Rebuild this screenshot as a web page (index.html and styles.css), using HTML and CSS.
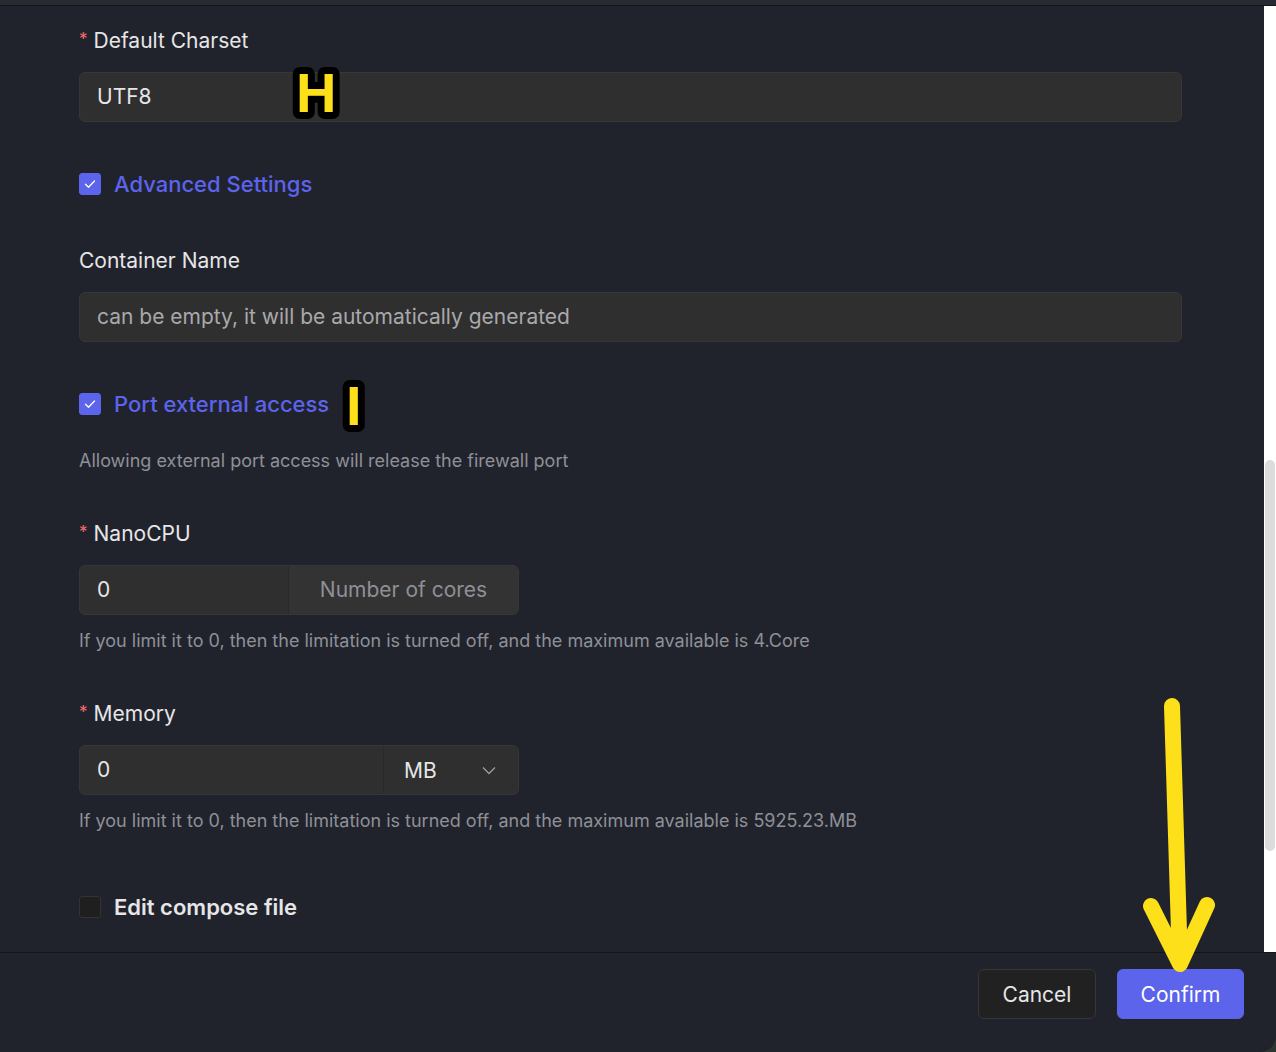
FILE: index.html
```html
<!DOCTYPE html>
<html lang="en">

<head>
  <meta charset="UTF-8">
  <meta name="viewport" content="width=device-width, initial-scale=1.0">
  <title>Create container</title>
  <link rel="stylesheet" href="styles.css">
</head>

<body>
  <div class="drawer">
    <div class="drawer-top"></div>

    <div class="drawer-main">
      <div class="drawer-body">

        <div class="form-item">
          <label class="form-label"><span class="required">*</span>Default Charset</label>
          <div class="input">UTF8</div>
        </div>

        <div class="form-item">
          <div class="check-row checked">
            <span class="checkbox"><svg viewBox="0 0 22 22" width="22" height="22"><path d="M6.5 11.2l3 3 6-6.2" fill="none" stroke="#fff" stroke-width="1.3" stroke-linecap="round" stroke-linejoin="round"/></svg></span>
            <span class="check-text">Advanced Settings</span>
          </div>
        </div>

        <div class="form-item">
          <label class="form-label">Container Name</label>
          <div class="input placeholder">can be empty, it will be automatically generated</div>
        </div>

        <div class="form-item">
          <div class="check-row checked">
            <span class="checkbox"><svg viewBox="0 0 22 22" width="22" height="22"><path d="M6.5 11.2l3 3 6-6.2" fill="none" stroke="#fff" stroke-width="1.3" stroke-linecap="round" stroke-linejoin="round"/></svg></span>
            <span class="check-text">Port external access</span>
          </div>
          <p class="form-help help-loose">Allowing external port access will release the firewall port</p>
        </div>

        <div class="form-item">
          <label class="form-label"><span class="required">*</span>NanoCPU</label>
          <div class="input-group">
            <div class="group-input cpu">0</div>
            <div class="group-append">Number of cores</div>
          </div>
          <p class="form-help">If you limit it to 0, then the limitation is turned off, and the maximum available is 4.Core</p>
        </div>

        <div class="form-item">
          <label class="form-label"><span class="required">*</span>Memory</label>
          <div class="input-group">
            <div class="group-input mem">0</div>
            <div class="group-select">
              <span>MB</span>
              <svg viewBox="0 0 16 16" width="16" height="16"><path d="M2 5.5l6 6 6-6" fill="none" stroke="#9a9ca3" stroke-width="1.3"/></svg>
            </div>
          </div>
          <p class="form-help">If you limit it to 0, then the limitation is turned off, and the maximum available is 5925.23.MB</p>
        </div>

        <div class="form-item last">
          <div class="check-row">
            <span class="checkbox"></span>
            <span class="check-text plain">Edit compose file</span>
          </div>
        </div>

      </div>

      <div class="scrollbar">
        <div class="scroll-thumb"></div>
      </div>
    </div>

    <div class="drawer-footer">
      <button class="btn btn-cancel">Cancel</button>
      <button class="btn btn-primary">Confirm</button>
    </div>
  </div>

  <!-- annotation marks drawn over the screenshot -->
  <svg class="marks" width="1276" height="1052" viewBox="0 0 1276 1052">
    <text class="mark-letter" x="296" y="112">H</text>
    <text class="mark-letter" x="346" y="425">I</text>
    <path d="M1172 706 L1180 964 M1151 906 L1180 964 L1207 905" fill="none" stroke="#fde01a" stroke-width="16" stroke-linecap="round" stroke-linejoin="round"/>
  </svg>
</body>

</html>
```

FILE: styles.css
```css
* {
  box-sizing: border-box;
  margin: 0;
  padding: 0;
}

body {
  width: 100vw;
  height: 100vh;
  overflow: hidden;
  background: #2c352f;
  font-family: Inter, 'Liberation Sans', sans-serif;
  color: #e5e5e7;
}

.drawer {
  display: flex;
  flex-direction: column;
  height: 100%;
}

.drawer-top {
  height: 6px;
  flex: 0 0 6px;
  background: #292b33;
  border-bottom: 1px solid #141519;
}

.drawer-main {
  flex: 1;
  display: flex;
  min-height: 0;
}

.drawer-body {
  flex: 1;
  background: #21232c;
  padding: 20px 82px 0 79px;
  overflow: hidden;
}

.scrollbar {
  flex: 0 0 12px;
  background: #fff;
  padding: 454px 1px 0 1px;
}

.scroll-thumb {
  height: 391px;
  background: #dcdcdd;
  border-radius: 5px;
}

.form-item {
  margin-bottom: 46px;
}

.form-item.last {
  margin-top: 58px;
}

.form-label {
  display: block;
  height: 30px;
  line-height: 30px;
  font-size: 21px;
  margin-bottom: 16px;
  color: #e6e6e8;
}

.required {
  color: #f56c6c;
  font-size: 17px;
  margin-right: 6px;
  vertical-align: top;
  line-height: 26px;
}

.input {
  height: 50px;
  line-height: 48px;
  background: #2f2f2f;
  border: 1px solid #363636;
  border-radius: 6px;
  padding: 0 17px;
  font-size: 21px;
  color: #e6e6e8;
}

.input.placeholder {
  color: #a9a9ab;
}

.check-row {
  display: flex;
  align-items: center;
  height: 32px;
}

.checkbox {
  width: 22px;
  height: 22px;
  border-radius: 3px;
  background: #1f1f1f;
  border: 1px solid #333336;
  margin-right: 13px;
  display: flex;
}

.check-row.checked .checkbox {
  background: #5c64ec;
  border-color: #5c64ec;
}

.checkbox svg {
  margin: -1px;
}

.check-text {
  font-size: 22px;
  font-weight: 500;
  color: #5c64ec;
}

.check-text.plain {
  color: #e6e6e8;
  font-weight: 600;
}

.form-help {
  margin-top: 14px;
  height: 24px;
  line-height: 24px;
  font-size: 18px;
  color: #8e9097;
}

.form-help.help-loose {
  margin-top: 29px;
}

.input-group {
  display: flex;
  width: 440px;
  height: 50px;
  background: #2f2f2f;
  border: 1px solid #363636;
  border-radius: 6px;
  overflow: hidden;
}

.group-input {
  padding: 0 17px;
  line-height: 48px;
  font-size: 21px;
  color: #e6e6e8;
}

.group-input.cpu {
  flex: 0 0 208px;
}

.group-input.mem {
  flex: 0 0 303px;
}

.group-append {
  flex: 1;
  background: #333333;
  border-left: 1px solid #292929;
  text-align: center;
  line-height: 48px;
  font-size: 21px;
  color: #8f9096;
}

.group-select {
  flex: 1;
  display: flex;
  align-items: center;
  justify-content: space-between;
  border-left: 1px solid #292929;
  padding: 0 21px 0 20px;
  font-size: 21px;
  color: #e6e6e8;
}

.drawer-footer {
  flex: 0 0 100px;
  background: #21232c;
  border-top: 1px solid #141519;
  border-bottom-right-radius: 16px;
  display: flex;
  justify-content: flex-end;
  align-items: flex-start;
  gap: 21px;
  padding: 16px 32px 0 0;
}

.btn {
  height: 50px;
  border-radius: 6px;
  font-family: inherit;
  font-size: 21px;
  color: #e6e6e8;
  background: #212121;
  border: 1px solid #36363a;
}

.btn-cancel {
  width: 118px;
}

.btn-primary {
  width: 127px;
  background: #5c64ec;
  border-color: #5c64ec;
  color: #fff;
}

.marks {
  position: absolute;
  left: 0;
  top: 0;
  pointer-events: none;
}

.mark-letter {
  font-family: 'Liberation Sans', sans-serif;
  font-weight: bold;
  font-size: 56px;
  fill: #fde01a;
  stroke: #000;
  stroke-width: 14px;
  stroke-linejoin: round;
  paint-order: stroke fill;
}
```
